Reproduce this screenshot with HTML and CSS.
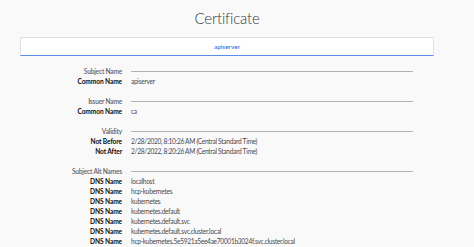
FILE: index.html
```html
<!DOCTYPE html>
<html>
<head>
    <title>Certificate</title>
    <link rel="stylesheet" href="styles.css">
</head>
<body>
<div class="page">
    <h1 class="title">Certificate</h1>

    <div class="tabs">
        <a class="tab selected" href="#">apiserver</a>
    </div>

    <div class="info">
        <div class="section">
            <span class="heading">Subject Name</span><span class="rule"></span>
            <span class="key">Common Name</span><span class="value">apiserver</span>
        </div>

        <div class="section">
            <span class="heading">Issuer Name</span><span class="rule"></span>
            <span class="key">Common Name</span><span class="value">ca</span>
        </div>

        <div class="section">
            <span class="heading">Validity</span><span class="rule"></span>
            <span class="key">Not Before</span><span class="value">2/28/2020, 8:10:26 AM (Central Standard Time)</span>
            <span class="key">Not After</span><span class="value">2/28/2022, 8:20:26 AM (Central Standard Time)</span>
        </div>

        <div class="section">
            <span class="heading">Subject Alt Names</span><span class="rule"></span>
            <span class="key">DNS Name</span><span class="value">localhost</span>
            <span class="key">DNS Name</span><span class="value">hcp-kubernetes</span>
            <span class="key">DNS Name</span><span class="value">kubernetes</span>
            <span class="key">DNS Name</span><span class="value">kubernetes.default</span>
            <span class="key">DNS Name</span><span class="value">kubernetes.default.svc</span>
            <span class="key">DNS Name</span><span class="value">kubernetes.default.svc.cluster.local</span>
            <span class="key">DNS Name</span><span class="value">hcp-kubernetes.5e5921a5ee4ae70001b3024f.svc.cluster.local</span>
        </div>
    </div>
</div>
</body>
</html>
```

FILE: styles.css
```css
html, body { margin: 0; padding: 0; background: #f9f9fa; }
body { font-family: Lato, "Noto Sans", sans-serif; color: #38383d; overflow: hidden; }

.page { width: 414px; margin-left: 20px; }

.title { margin: 0; padding-top: 6px; height: 31px; font-size: 15px; font-weight: 300; line-height: 24px; letter-spacing: -0.2px; text-align: center; color: #38383d; }

.tabs { display: flex; background: #fff; border: 1px solid #e0e0e2; border-bottom: 1px solid #5b8ee6; height: 17px; }
.tabs .tab { flex: 1; text-align: center; font-size: 6.5px; line-height: 17px; color: #2a62d9; text-decoration: none; }

.info { width: 393px; padding-top: 10px; }
.section { display: grid; grid-template-columns: 102px 1fr; column-gap: 9px; grid-auto-rows: 10px; margin-bottom: 10px; font-size: 6.6px; line-height: 10px; }
.section .heading { text-align: right; color: #5f5f63; font-weight: 600; letter-spacing: -0.2px; }
.section .rule { align-self: center; height: 0; border-top: 1px solid #b1b1b3; }
.section .key { text-align: right; font-weight: 700; color: #0c0c0d; letter-spacing: -0.1px; }
.section .value { color: #4a4a4f; white-space: nowrap; letter-spacing: -0.3px; }
```
